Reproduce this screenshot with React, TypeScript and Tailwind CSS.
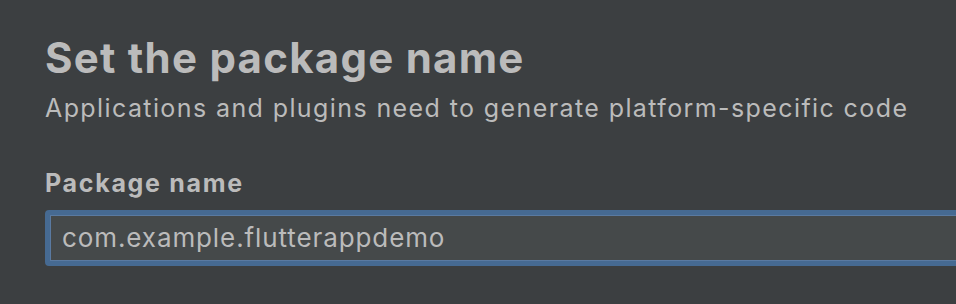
export default function App() {
  return (
    <div
      className="h-[304px] w-[956px] overflow-hidden bg-[#3c3f41] pl-[45px] pt-[33px] text-[#bbbbbb]"
      style={{ fontFamily: "Inter, 'Noto Sans', sans-serif" }}
    >
      <h1 className="text-[42px] font-bold leading-[50px] tracking-[1.25px]">Set the package name</h1>
      <p className="mt-[10px] text-[25px] leading-[30px] tracking-[1.4px]">
        Applications and plugins need to generate platform-specific code
      </p>

      <label className="mt-[45px] block text-[25px] font-bold leading-[30px] tracking-[1.7px]">
        Package name
      </label>
      <div className="mt-[12px] flex h-[56px] w-[1000px] items-center rounded-[4px] border-[5px] border-[#466a92] bg-[#45494a] pl-[12px] shadow-[inset_0_0_0_1px_#5a7aa1]">
        <span className="text-[26px] leading-[30px] tracking-[0.9px]">com.example.flutterappdemo</span>
      </div>
    </div>
  );
}
